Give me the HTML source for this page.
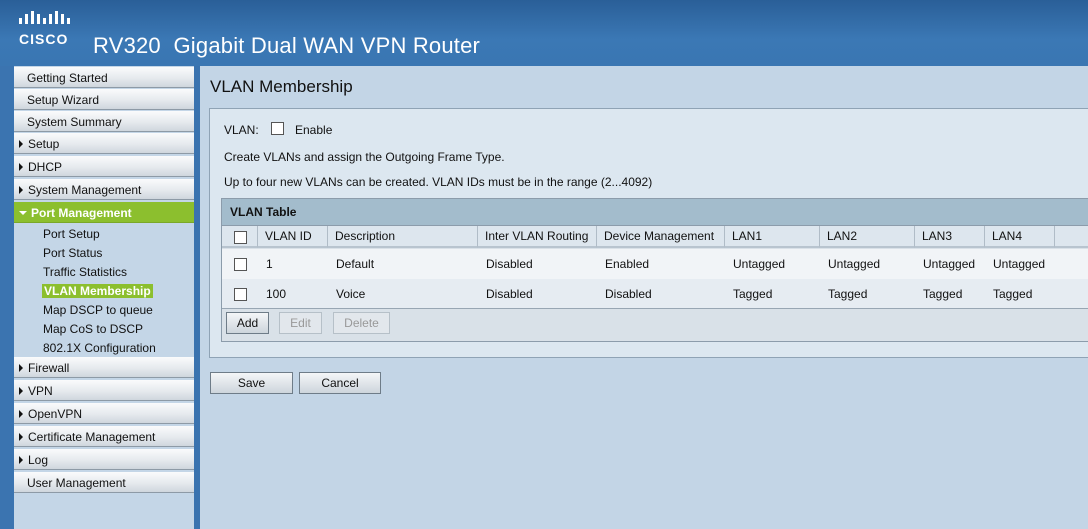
<!DOCTYPE html>
<html><head><style>
*{margin:0;padding:0;box-sizing:border-box}
body{width:1088px;height:529px;overflow:hidden;font-family:"Liberation Sans",Arial,sans-serif;font-size:12px;color:#111;background:#c3d5e6;position:relative}
.hdr{position:absolute;left:0;top:0;width:1088px;height:66px;background:linear-gradient(180deg,#2a5f98 0%,#3b78b5 60%,#3a76b2 100%)}
.hdr .t{position:absolute;left:93px;top:33px;color:#fff;font-size:22px;letter-spacing:0.2px}
.logo{position:absolute;left:19px;top:31px;color:#fff;font-weight:bold;font-size:14px;letter-spacing:1px}
.strip{position:absolute;left:0;top:66px;width:14px;height:463px;background:#3b74b0}
.sep{position:absolute;left:194px;top:66px;width:6px;height:463px;background:#3a73af}
.side{position:absolute;left:14px;top:66px;width:180px;height:463px;background:#c4d6e7}
.mi{position:absolute;left:14px;width:180px;height:21px;background:linear-gradient(180deg,#fafbfc 0%,#e6eaee 55%,#cfd6dd 100%);border-bottom:1px solid #8d9aa6;font-size:12px;line-height:22px;padding-left:13px}
.mi.a{padding-left:5px}
.mi.a:before{content:"";display:inline-block;border-left:4px solid #111;border-top:4px solid transparent;border-bottom:4px solid transparent;margin-right:5px;vertical-align:0}
.mi.g{background:#8cbf2e;color:#fff;font-weight:bold;border-bottom:1px solid #7aa828}
.mi.g:before{border-left:4px solid transparent;border-right:4px solid transparent;border-top:4px solid #fff;border-bottom:0;margin-right:4px;vertical-align:2px}
.sub{position:absolute;left:43px;font-size:12px}
.sub.s{background:#8cbf2e;color:#fff;font-weight:bold;left:42px;padding:0 2px}
.title{position:absolute;left:210px;top:77px;font-size:17px}
.panel{position:absolute;left:209px;top:108px;width:890px;height:250px;background:#dce7f0;border:1px solid #8fa3b5}
.txt{position:absolute;font-size:12px}
.cb{position:absolute;width:13px;height:13px;background:#fff;border:1px solid #555}
.tbl{position:absolute;left:221px;top:198px;width:880px;height:144px;border:1px solid #8c9cab;background:#d9e1e8}
.th{position:absolute;left:0;top:0;width:880px;height:27px;background:#a3bccc;font-weight:bold;line-height:27px;padding-left:8px;border-bottom:1px solid #8c9cab}
.ch{position:absolute;top:27px;height:22px;background:#dde6ee;border-right:1px solid #b0bcc7;border-bottom:2px solid #b8c4cf;line-height:21px;padding-left:7px}
.row{position:absolute;left:0;width:880px;height:30px;line-height:30px}
.row span,.ch span{position:absolute}
.btn{position:absolute;height:22px;border:1px solid #6e7c88;background:linear-gradient(180deg,#f4f6f8,#cdd5dc);text-align:center;line-height:20px;font-size:12px}
.btn.d{color:#999;border-color:#b6c0c8;background:#e2e7ec}
</style></head><body>
<div class="hdr">
<svg style="position:absolute;left:19px;top:11px" width="58" height="18"><g fill="#fff">
<rect x="0" y="7" width="3" height="6"/><rect x="6" y="3" width="3" height="10"/><rect x="12" y="0" width="3" height="13"/><rect x="18" y="3" width="3" height="10"/><rect x="24" y="7" width="3" height="6"/><rect x="30" y="3" width="3" height="10"/><rect x="36" y="0" width="3" height="13"/><rect x="42" y="3" width="3" height="10"/><rect x="48" y="7" width="3" height="6"/></g></svg>
<div class="logo">CISCO</div>
<div class="t">RV320&nbsp; Gigabit Dual WAN VPN Router</div>
</div>
<div class="strip"></div><div class="side"></div><div class="sep"></div>
<div class="mi" style="top:67px">Getting Started</div>
<div class="mi" style="top:89px">Setup Wizard</div>
<div class="mi" style="top:111px">System Summary</div>
<div class="mi a" style="top:133px">Setup</div>
<div class="mi a" style="top:156px">DHCP</div>
<div class="mi a" style="top:179px">System Management</div>
<div class="mi a g" style="top:202px">Port Management</div>
<div class="sub" style="top:227px">Port Setup</div>
<div class="sub" style="top:246px">Port Status</div>
<div class="sub" style="top:265px">Traffic Statistics</div>
<div class="sub s" style="top:284px">VLAN Membership</div>
<div class="sub" style="top:303px">Map DSCP to queue</div>
<div class="sub" style="top:322px">Map CoS to DSCP</div>
<div class="sub" style="top:341px">802.1X Configuration</div>
<div class="mi a" style="top:357px">Firewall</div>
<div class="mi a" style="top:380px">VPN</div>
<div class="mi a" style="top:403px">OpenVPN</div>
<div class="mi a" style="top:426px">Certificate Management</div>
<div class="mi a" style="top:449px">Log</div>
<div class="mi" style="top:472px">User Management</div>

<div class="title">VLAN Membership</div>
<div class="panel"></div>
<div class="txt" style="left:224px;top:123px">VLAN:</div>
<div class="cb" style="left:271px;top:122px"></div>
<div class="txt" style="left:295px;top:123px">Enable</div>
<div class="txt" style="left:224px;top:150px">Create VLANs and assign the Outgoing Frame Type.</div>
<div class="txt" style="left:224px;top:175px">Up to four new VLANs can be created. VLAN IDs must be in the range (2...4092)</div>

<div class="tbl">
<div class="th">VLAN Table</div>
<div class="ch" style="left:0;width:36px"></div>
<div class="ch" style="left:36px;width:70px">VLAN ID</div>
<div class="ch" style="left:106px;width:150px">Description</div>
<div class="ch" style="left:256px;width:119px">Inter VLAN Routing</div>
<div class="ch" style="left:375px;width:128px">Device Management</div>
<div class="ch" style="left:503px;width:95px">LAN1</div>
<div class="ch" style="left:598px;width:95px">LAN2</div>
<div class="ch" style="left:693px;width:70px">LAN3</div>
<div class="ch" style="left:763px;width:70px">LAN4</div>
<div class="ch" style="left:833px;width:47px;border-right:0"></div>
<div class="row" style="top:50px;background:#f1f4f7"><span style="left:44px">1</span><span style="left:114px">Default</span><span style="left:264px">Disabled</span><span style="left:383px">Enabled</span><span style="left:511px">Untagged</span><span style="left:606px">Untagged</span><span style="left:701px">Untagged</span><span style="left:771px">Untagged</span></div>
<div class="row" style="top:80px;background:#e6ecf2;border-bottom:1px solid #98a6b3"><span style="left:44px">100</span><span style="left:114px">Voice</span><span style="left:264px">Disabled</span><span style="left:383px">Disabled</span><span style="left:511px">Tagged</span><span style="left:606px">Tagged</span><span style="left:701px">Tagged</span><span style="left:771px">Tagged</span></div>
<div class="cb" style="left:12px;top:32px"></div>
<div class="cb" style="left:12px;top:59px"></div>
<div class="cb" style="left:12px;top:89px"></div>
<div class="btn" style="left:4px;top:113px;width:43px">Add</div>
<div class="btn d" style="left:57px;top:113px;width:43px">Edit</div>
<div class="btn d" style="left:111px;top:113px;width:57px">Delete</div>
</div>

<div class="btn" style="left:210px;top:372px;width:83px">Save</div>
<div class="btn" style="left:299px;top:372px;width:82px">Cancel</div>
</body></html>
